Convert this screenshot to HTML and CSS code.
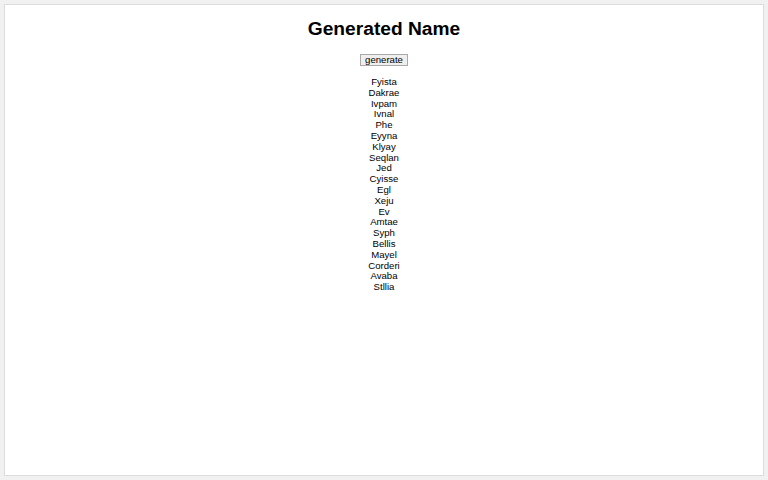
FILE: index.html
```html
<!DOCTYPE html>
<html lang="en">
<head>
<meta charset="utf-8">
<title>Generated Name</title>
<link rel="stylesheet" href="styles.css">
</head>
<body>
<main class="panel">
  <h1 class="title">Generated Name</h1>
  <button class="generate" type="button">generate</button>
  <ul class="names">
    <li>Fyista</li>
    <li>Dakrae</li>
    <li>Ivpam</li>
    <li>Ivnal</li>
    <li>Phe</li>
    <li>Eyyna</li>
    <li>Klyay</li>
    <li>Seqlan</li>
    <li>Jed</li>
    <li>Cyisse</li>
    <li>Egl</li>
    <li>Xeju</li>
    <li>Ev</li>
    <li>Amtae</li>
    <li>Syph</li>
    <li>Bellis</li>
    <li>Mayel</li>
    <li>Corderi</li>
    <li>Avaba</li>
    <li>Stllia</li>
  </ul>
</main>
</body>
</html>
```

FILE: styles.css
```css
html, body {
  height: 100%;
}

body {
  margin: 0;
  padding: 4px;
  box-sizing: border-box;
  background: #f1f1f1;
  font-family: "Liberation Sans", Arial, sans-serif;
  color: #000;
}

.panel {
  box-sizing: border-box;
  height: 100%;
  background: #fff;
  border: 1px solid #dcdcdc;
  display: flex;
  flex-direction: column;
  align-items: center;
  padding-top: 13px;
}

.title {
  margin: 0;
  font-size: 19.2px;
  line-height: 22px;
  font-weight: bold;
}

.generate {
  margin-top: 14px;
  font-family: "Liberation Sans", Arial, sans-serif;
  font-size: 9.6px;
  line-height: 10px;
  padding: 0 4px;
  border: 1px solid #a9a9a9;
  border-radius: 0;
  background: #efefef;
  color: #000;
}

.names {
  list-style: none;
  margin: 11px 0 0;
  padding: 0;
  text-align: center;
  font-size: 9.6px;
  line-height: 10.8px;
}
```
